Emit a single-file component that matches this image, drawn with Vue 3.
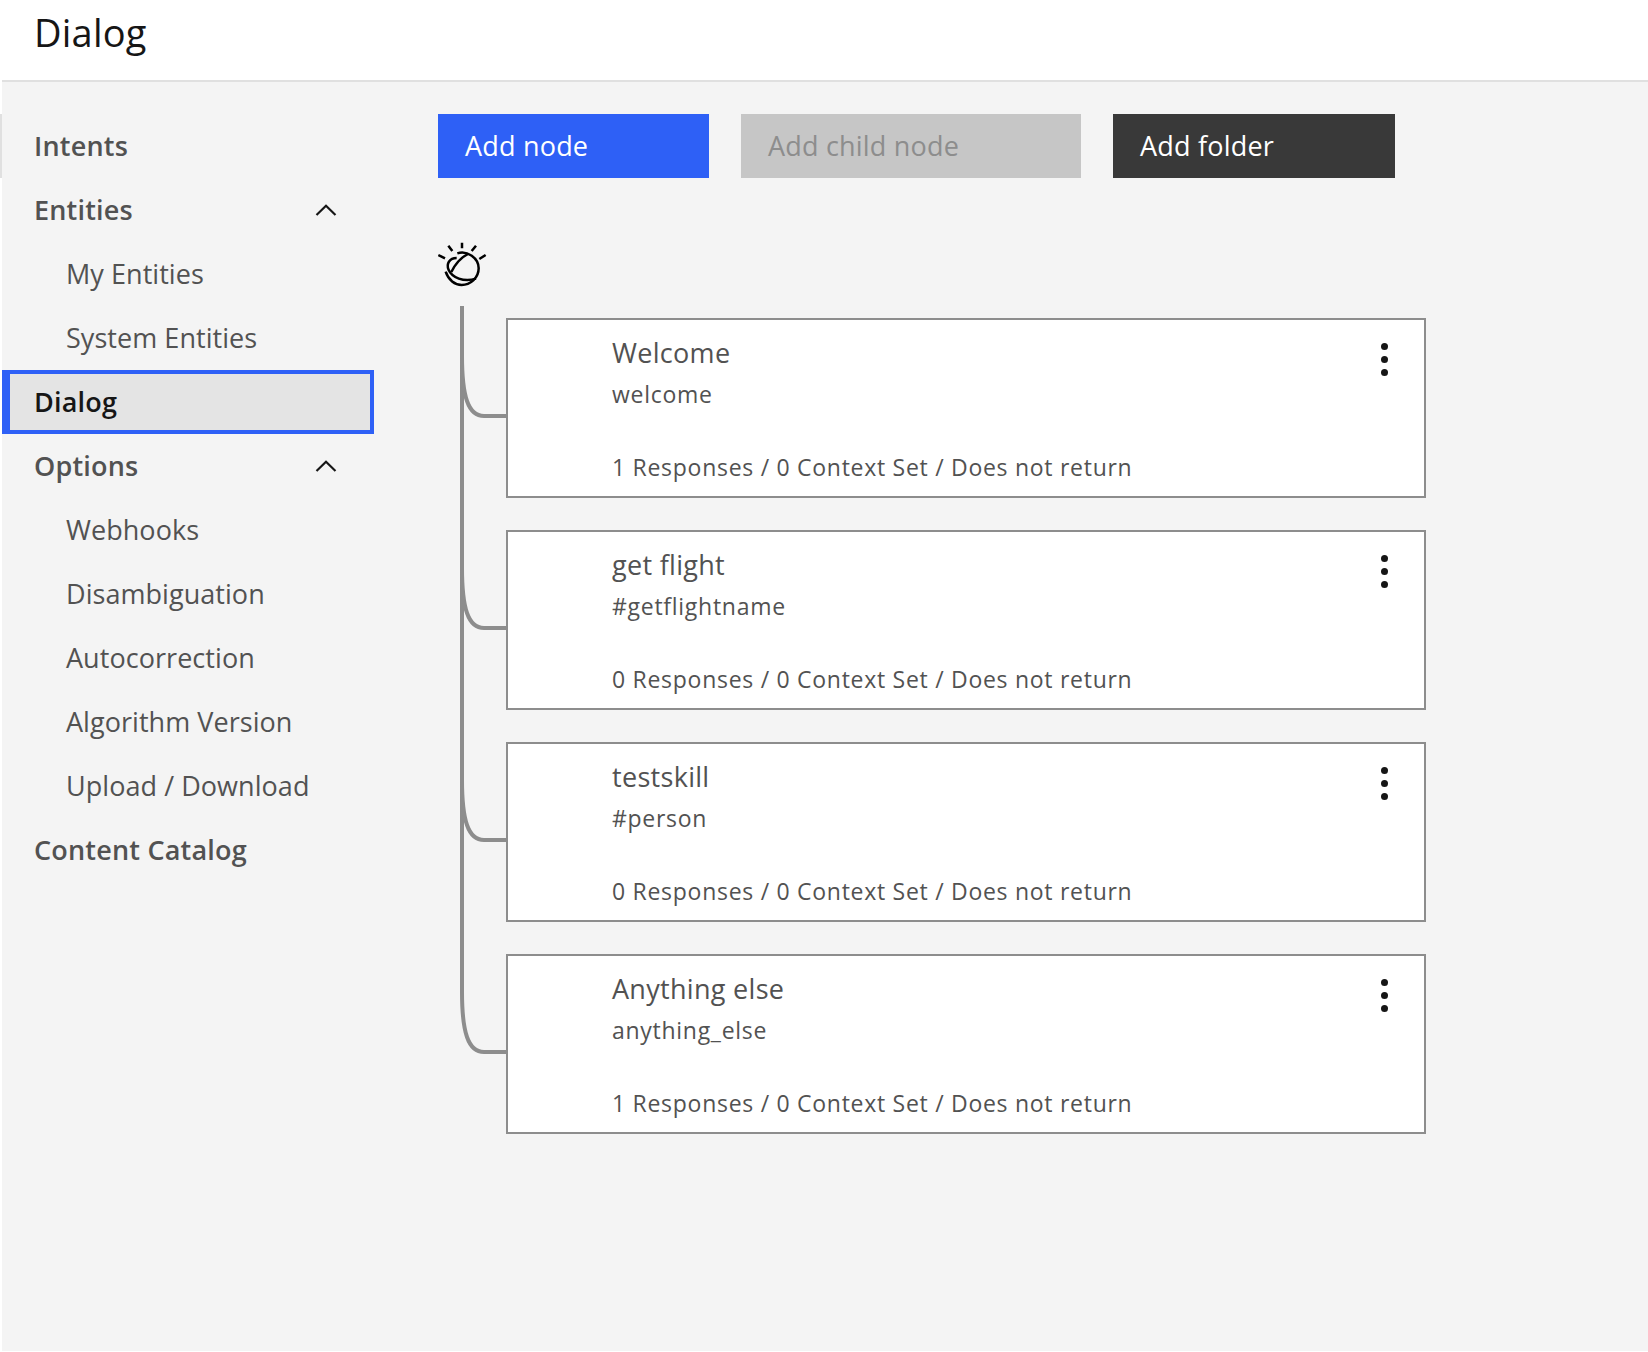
<script setup>
const navItems = [
  { label: 'Intents', level: 1, first: true },
  { label: 'Entities', level: 1, open: true },
  { label: 'My Entities', level: 2 },
  { label: 'System Entities', level: 2 },
  { label: 'Dialog', level: 1, active: true },
  { label: 'Options', level: 1, open: true },
  { label: 'Webhooks', level: 2 },
  { label: 'Disambiguation', level: 2 },
  { label: 'Autocorrection', level: 2 },
  { label: 'Algorithm Version', level: 2 },
  { label: 'Upload / Download', level: 2 },
  { label: 'Content Catalog', level: 1 }
]

const nodes = [
  { title: 'Welcome', condition: 'welcome', responses: 1 },
  { title: 'get flight', condition: '#getflightname', responses: 0 },
  { title: 'testskill', condition: '#person', responses: 0 },
  { title: 'Anything else', condition: 'anything_else', responses: 1 }
]

// one curved branch per node, 212px apart
const branches = nodes.map((n, i) => {
  const y = 110 + i * 212
  return `M2 ${y - 60} C2 ${y - 20} 8 ${y} 24 ${y} L46 ${y}`
})
</script>

<template>
  <div class="page">
    <header class="page-header">
      <h1 class="page-title">Dialog</h1>
    </header>
    <div class="content">
      <nav class="sidenav">
        <a
          v-for="item in navItems"
          :key="item.label"
          class="nav-item"
          :class="{
            'nav-item--sub': item.level === 2,
            'nav-item--active': item.active,
            'nav-item--first': item.first
          }"
        >
          <span class="nav-item__label">{{ item.label }}</span>
          <svg v-if="item.open" class="chevron" width="22" height="12" viewBox="0 0 22 12">
            <path d="M1.5 11 L11 1.8 L20.5 11" fill="none" stroke="#161616" stroke-width="2.2" />
          </svg>
        </a>
      </nav>
      <main class="editor">
        <div class="toolbar">
          <button class="btn btn--primary">Add node</button>
          <button class="btn btn--disabled">Add child node</button>
          <button class="btn btn--dark">Add folder</button>
        </div>
        <svg class="watson" width="50" height="45" viewBox="24 36 150 135">
          <g fill="none" stroke="#000" stroke-width="7.5">
            <path d="M25 75 L45 85 M55 47 L67 63 M96 38 L96 55 M138 47 L125 63 M167 75 L148 87" />
            <path d="M82 70 C112 60 146 85 146 115 C146 145 120 165 95 165 C75 165 55 150 47 125" />
            <path d="M114 72 C94 82 76 102 64 126" />
            <path d="M80 84 C58 84 48 102 56 120 C66 142 100 158 138 146" />
          </g>
        </svg>
        <div class="tree">
          <svg class="vine" width="46" height="750" viewBox="0 0 46 750">
            <path d="M2 0 L2 686" fill="none" stroke="#8d8d8d" stroke-width="4" />
            <path v-for="d in branches" :key="d" :d="d" fill="none" stroke="#8d8d8d" stroke-width="4" />
          </svg>
          <div class="node-list">
            <div v-for="node in nodes" :key="node.title" class="node">
              <div class="node__text">
                <div class="node__title">{{ node.title }}</div>
                <div class="node__condition">{{ node.condition }}</div>
                <div class="node__summary">{{ node.responses }} Responses / 0 Context Set / Does not return</div>
              </div>
              <div class="node__menu">
                <i></i><i></i><i></i>
              </div>
            </div>
          </div>
        </div>
      </main>
    </div>
  </div>
</template>

<style scoped>
.page {
  width: 1648px;
  height: 1352px;
  display: flex;
  flex-direction: column;
  font-family: "Open Sans", sans-serif;
  color: #525252;
}

.page-header {
  height: 80px;
  padding-left: 34px;
  background: #fff;
}

.page-title {
  margin: 0;
  font-size: 38px;
  font-weight: 400;
  line-height: 65px;
  letter-spacing: 0.2px;
  color: #161616;
}

.content {
  flex: 1;
  margin: 0 0 1px 2px;
  display: flex;
  background: #f4f4f4;
  border-top: 2px solid #e0e0e0;
  padding-top: 32px;
}

.sidenav {
  width: 372px;
  flex-shrink: 0;
  display: flex;
  flex-direction: column;
}

.nav-item {
  height: 64px;
  box-sizing: border-box;
  display: flex;
  align-items: center;
  justify-content: space-between;
  padding: 0 37px 0 32px;
  font-size: 27px;
  font-weight: 600;
  letter-spacing: 0.2px;
}

.nav-item__label {
  margin-bottom: 2px;
}

.nav-item--first {
  margin-left: -2px;
  padding-left: 32px;
  border-left: 2px solid #e0e0e0;
}

.nav-item--sub {
  padding-left: 64px;
  font-weight: 400;
  letter-spacing: 0.05px;
}

.nav-item--active {
  padding-left: 24px;
  border: 4px solid #2e60f6;
  border-left-width: 8px;
  background: #e4e4e4;
  color: #161616;
}

.chevron {
  flex-shrink: 0;
}

.editor {
  margin-left: 64px;
  flex: 1;
}

.toolbar {
  display: flex;
  gap: 32px;
}

.btn {
  height: 64px;
  border: none;
  padding: 0 26px 2px 27px;
  text-align: left;
  font-family: inherit;
  font-size: 27px;
  letter-spacing: 0.2px;
}

.btn--primary {
  width: 271px;
  background: #2e60f6;
  color: #fff;
}

.btn--disabled {
  width: 340px;
  background: #c6c6c6;
  color: #8d8d8d;
}

.btn--dark {
  width: 282px;
  background: #393939;
  color: #fff;
}

.watson {
  display: block;
  margin-top: 64px;
}

.tree {
  margin-top: 19px;
  margin-left: 22px;
  display: flex;
}

.vine {
  flex-shrink: 0;
}

.node-list {
  margin-top: 12px;
  display: flex;
  flex-direction: column;
  gap: 32px;
}

.node {
  width: 920px;
  height: 180px;
  box-sizing: border-box;
  display: flex;
  justify-content: space-between;
  padding: 0 36px 0 104px;
  background: #fff;
  border: 2px solid #8d8d8d;
}

.node__title {
  margin-top: 14px;
  font-size: 27px;
  line-height: 38px;
  letter-spacing: 0.3px;
}

.node__condition {
  margin-top: 6px;
  font-size: 23px;
  line-height: 32px;
  letter-spacing: 0.72px;
}

.node__summary {
  margin-top: 41px;
  font-size: 23px;
  line-height: 32px;
  letter-spacing: 0.72px;
}

.node__menu {
  margin-top: 23px;
  display: flex;
  flex-direction: column;
  gap: 6px;
}

.node__menu i {
  display: block;
  width: 7px;
  height: 7px;
  border-radius: 50%;
  background: #161616;
}
</style>

<style>
body {
  background: #fff;
}
</style>
